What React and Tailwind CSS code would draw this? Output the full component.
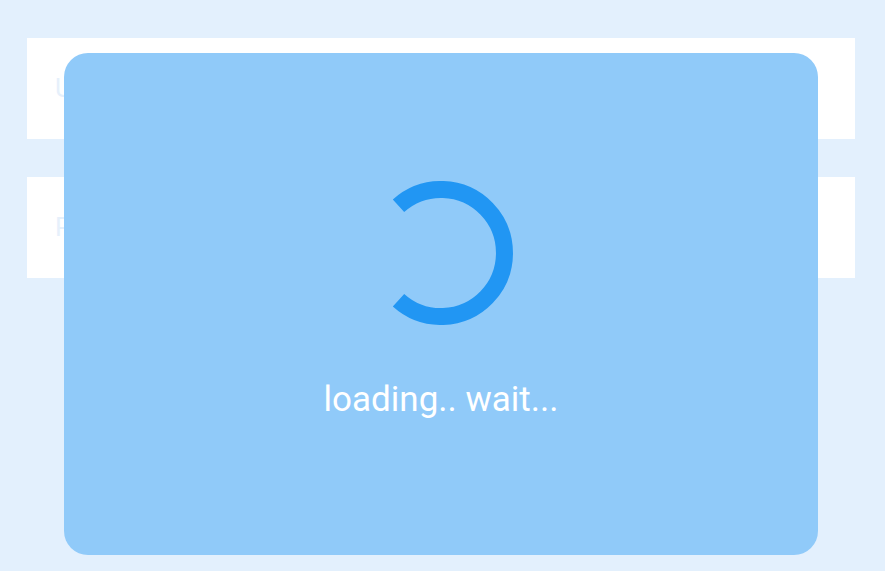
import React from 'react';

const Spinner = () => (
    <svg width="144" height="144" viewBox="0 0 144 144" className="block">
        <path
            d="M29.5 24.8 A63.5 63.5 0 1 1 29.5 119.2"
            fill="none"
            stroke="#2196f3"
            strokeWidth="17"
        />
    </svg>
);

const App = () => {
    const fields = ['Username', 'Password'];

    return (
        <div
            className="relative min-h-screen bg-[#e3f0fd] pl-[27px] pr-[30px] pt-[38px]"
            style={{ fontFamily: 'Roboto, "Liberation Sans", sans-serif' }}
        >
            {/* Form behind the overlay */}
            <div className="flex flex-col gap-[38px]">
                {fields.map((f) => (
                    <div key={f} className="h-[101px] bg-white flex items-center px-[28px]">
                        <span className="text-[26px] text-[#e6f0fb]">{f}</span>
                    </div>
                ))}
            </div>

            {/* Loading overlay */}
            <div className="absolute left-[64px] top-[53px] w-[754px] h-[502px] rounded-[24px] bg-[#90caf9] flex flex-col items-center pt-[128px]">
                <Spinner />
                <div className="mt-[51px] text-[35px] leading-[48px] text-white">loading.. wait...</div>
            </div>
        </div>
    );
};

export default App;
